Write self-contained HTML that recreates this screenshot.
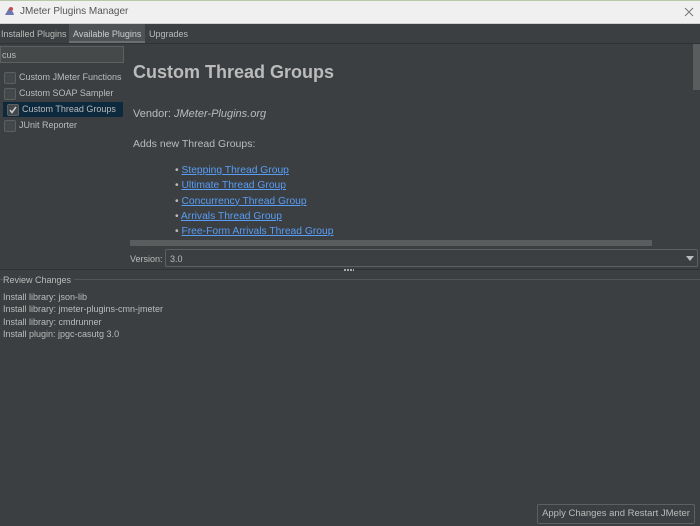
<html><head><style>
body{margin:0;width:700px;height:526px;background:#3c3f41;font-family:"Liberation Sans",sans-serif;font-size:9px;color:#bbbbbb;position:relative;overflow:hidden}
.a{position:absolute;white-space:nowrap}
.cb{position:absolute;width:10px;height:10px;border:1px solid #5e6060;background:#43494a;border-radius:2px}
a{color:#589df6;text-decoration:underline}
</style></head><body>
<div class="a" style="left:0;top:0;width:700px;height:1px;background:#b8c8a8"></div>
<div class="a" style="left:0;top:1px;width:700px;height:22px;background:#f0f0f0;border-bottom:1px solid #d0d0d0"></div>
<svg class="a" style="left:4px;top:6px" width="11" height="10"><path d="M1 9 L5 2 L9 6 L10 9 Z" fill="#6a7ab0"/><circle cx="7" cy="3" r="2" fill="#c05050"/></svg>
<div class="a" style="left:20px;top:6px;color:#555;font-size:10px">JMeter Plugins Manager</div>
<svg class="a" style="left:684px;top:7px" width="10" height="10"><path d="M1 1L9 9M9 1L1 9" stroke="#777" stroke-width="1"/></svg>
<div class="a" style="left:0;top:24px;width:700px;height:19px;background:#3c3f41;border-bottom:1px solid #323232"></div>
<div class="a" style="left:1px;top:29px">Installed Plugins</div>
<div class="a" style="left:69px;top:24px;width:76px;height:19px;background:#4e5254;border-bottom:2px solid #6b6f72;box-sizing:border-box"></div>
<div class="a" style="left:73px;top:29px;color:#ccc">Available Plugins</div>
<div class="a" style="left:149px;top:29px">Upgrades</div>
<div class="a" style="left:0;top:46px;width:124px;height:17px;background:#45494a;border:1px solid #5e6060;box-sizing:border-box"></div>
<div class="a" style="left:2px;top:50px">cus</div>
<div class="a" style="left:3px;top:102px;width:120px;height:15px;background:#0d293e"></div>
<div class="cb" style="left:4px;top:72px"></div><div class="a" style="left:19px;top:72px">Custom JMeter Functions</div>
<div class="cb" style="left:4px;top:88px"></div><div class="a" style="left:19px;top:88px">Custom SOAP Sampler</div>
<div class="cb" style="left:7px;top:104px"></div><svg class="a" style="left:8px;top:105px" width="10" height="10"><path d="M2 5L4 7.5L8 2" stroke="#ccc" stroke-width="1.5" fill="none"/></svg><div class="a" style="left:22px;top:104px">Custom Thread Groups</div>
<div class="cb" style="left:4px;top:120px"></div><div class="a" style="left:19px;top:120px">JUnit Reporter</div>
<div class="a" style="left:693px;top:44px;width:7px;height:46px;background:#5a5d5e"></div>
<div class="a" style="left:133px;top:62px;font-size:18px;font-weight:bold;color:#bbbbbb">Custom Thread Groups</div>
<div class="a" style="left:133px;top:108px;font-size:11px">Vendor: <i>JMeter-Plugins.org</i></div>
<div class="a" style="left:133px;top:138px;font-size:10.5px">Adds new Thread Groups:</div>
<div class="a" style="left:175px;top:163px;font-size:10.3px;line-height:15.3px">• <a>Stepping Thread Group</a><br>• <a>Ultimate Thread Group</a><br>• <a>Concurrency Thread Group</a><br>• <a>Arrivals Thread Group</a><br>• <a>Free-Form Arrivals Thread Group</a></div>
<div class="a" style="left:130px;top:240px;width:522px;height:6px;background:#5a5d5e"></div>
<div class="a" style="left:130px;top:254px">Version:</div>
<div class="a" style="left:165px;top:249px;width:533px;height:18px;border:1px solid #5e6060;border-radius:2px;background:#3c3f41;box-sizing:border-box"></div>
<div class="a" style="left:170px;top:254px">3.0</div>
<svg class="a" style="left:686px;top:256px" width="8" height="6"><path d="M0 0H8L4 5Z" fill="#bbb"/></svg>
<div class="a" style="left:0;top:269px;width:700px;height:1px;background:#2f3132"></div>
<div class="a" style="left:344px;top:269px;width:10px;height:2px;background:repeating-linear-gradient(90deg,#aaa 0 2px,transparent 2px 3px)"></div>
<div class="a" style="left:0;top:279px;width:700px;height:1px;background:#555"></div>
<div class="a" style="left:3px;top:275px;background:#3c3f41;padding-right:3px">Review Changes</div>
<div class="a" style="left:3px;top:291px;line-height:12.3px">Install library: json-lib<br>Install library: jmeter-plugins-cmn-jmeter<br>Install library: cmdrunner<br>Install plugin: jpgc-casutg 3.0</div>
<div class="a" style="left:537px;top:504px;width:158px;height:20px;border:1px solid #5e6060;border-radius:2px;background:#3c3f41;box-sizing:border-box;text-align:center;line-height:18px;font-size:9.5px">Apply Changes and Restart JMeter</div>
</body></html>
